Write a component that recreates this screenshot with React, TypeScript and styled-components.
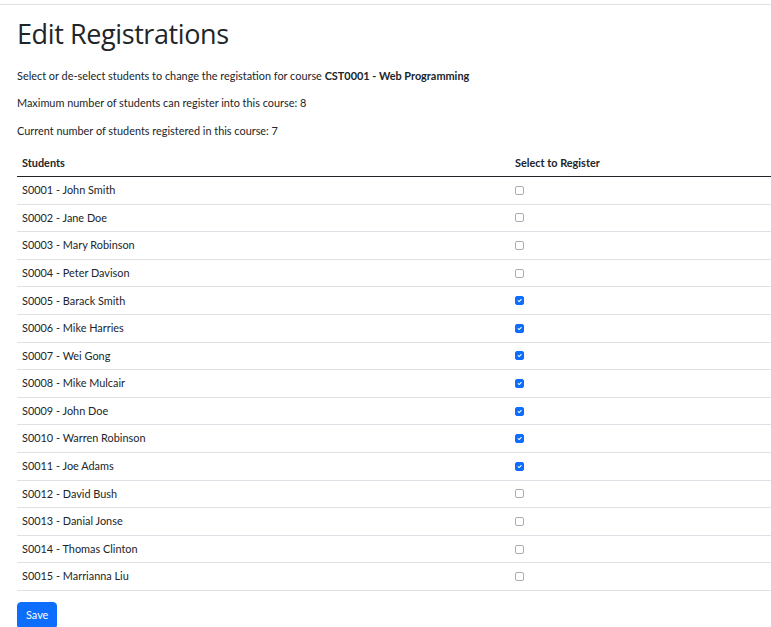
import styled, { createGlobalStyle } from "styled-components";

const GlobalStyle = createGlobalStyle`
  html, body {
    margin: 0;
    padding: 0;
    background: #fff;
  }
  body {
    font-family: "Lato", "Open Sans", sans-serif;
    font-size: 10.9px;
    line-height: 16.5px;
    color: #212529;
  }
`;

const students = [
  { id: "S0001", name: "John Smith", registered: false },
  { id: "S0002", name: "Jane Doe", registered: false },
  { id: "S0003", name: "Mary Robinson", registered: false },
  { id: "S0004", name: "Peter Davison", registered: false },
  { id: "S0005", name: "Barack Smith", registered: true },
  { id: "S0006", name: "Mike Harries", registered: true },
  { id: "S0007", name: "Wei Gong", registered: true },
  { id: "S0008", name: "Mike Mulcair", registered: true },
  { id: "S0009", name: "John Doe", registered: true },
  { id: "S0010", name: "Warren Robinson", registered: true },
  { id: "S0011", name: "Joe Adams", registered: true },
  { id: "S0012", name: "David Bush", registered: false },
  { id: "S0013", name: "Danial Jonse", registered: false },
  { id: "S0014", name: "Thomas Clinton", registered: false },
  { id: "S0015", name: "Marrianna Liu", registered: false },
];

export default function App() {
  return (
    <>
      <GlobalStyle />
      <TopBar />
      <Main>
        <Title>Edit Registrations</Title>
        <Text>
          Select or de-select students to change the registation for course{" "}
          <strong>CST0001 - Web Programming</strong>
        </Text>
        <Text>Maximum number of students can register into this course: 8</Text>
        <Text>Current number of students registered in this course: 7</Text>
        <form onSubmit={(e) => e.preventDefault()}>
          <Table>
            <colgroup>
              <col style={{ width: "493px" }} />
              <col />
            </colgroup>
            <thead>
              <tr>
                <Th>Students</Th>
                <Th>Select to Register</Th>
              </tr>
            </thead>
            <tbody>
              {students.map((s) => (
                <tr key={s.id}>
                  <Td>
                    {s.id} - {s.name}
                  </Td>
                  <Td>
                    <Check type="checkbox" defaultChecked={s.registered} />
                  </Td>
                </tr>
              ))}
            </tbody>
          </Table>
          <SaveButton type="submit">Save</SaveButton>
        </form>
      </Main>
    </>
  );
}

const TopBar = styled.div`
  height: 4px;
  border-bottom: 1px solid #dee2e6;
`;

const Main = styled.main`
  padding: 12px 0 0 17px;
`;

const Title = styled.h1`
  margin: 0 0 17px;
  font-family: "Open Sans", sans-serif;
  font-size: 27px;
  font-weight: 500;
  line-height: 33.6px;
  letter-spacing: -0.4px;
`;

const Text = styled.p`
  margin: 0 0 11px;
  strong {
    font-weight: 700;
  }
`;

const Table = styled.table`
  width: 100%;
  table-layout: fixed;
  border-collapse: collapse;
  margin-bottom: 11px;
`;

const Th = styled.th`
  text-align: left;
  font-weight: 700;
  padding: 5px 5px 4.5px;
  border-bottom: 1.5px solid #212529;
`;

const Td = styled.td`
  padding: 5px;
  height: 16.6px;
  vertical-align: middle;
  border-bottom: 1px solid #dee2e6;
`;

const Check = styled.input`
  appearance: none;
  display: block;
  margin: 0;
  width: 9px;
  height: 9px;
  border: 1px solid #a9aeb3;
  border-radius: 2px;
  background: #fff;
  &:checked {
    background-color: #0d6efd;
    border-color: #0d6efd;
    background-image: url("data:image/svg+xml,%3csvg xmlns='http://www.w3.org/2000/svg' viewBox='0 0 20 20'%3e%3cpath fill='none' stroke='%23fff' stroke-linecap='round' stroke-linejoin='round' stroke-width='3' d='M6 10l3 3l6-6'/%3e%3c/svg%3e");
    background-size: 100% 100%;
  }
`;

const SaveButton = styled.button`
  font-family: inherit;
  font-size: 10.9px;
  line-height: 16.5px;
  color: #fff;
  background: #0d6efd;
  border: 1px solid #0d6efd;
  border-radius: 4px;
  padding: 4px 8px;
  cursor: pointer;
`;
